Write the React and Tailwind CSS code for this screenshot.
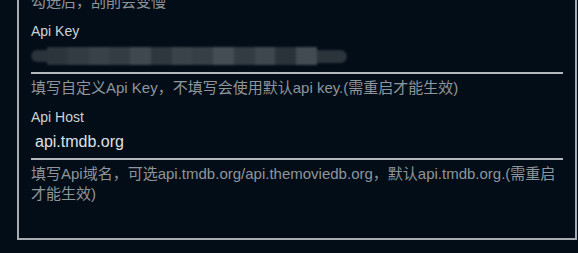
import React from 'react';

const font = { fontFamily: '"Liberation Sans", Arial, "Noto Sans CJK SC", sans-serif' };

function Field({ label, children, help }) {
  return (
    <div>
      <div className="text-[14px] leading-[18px] font-medium text-[#cfd2d5] mt-[10px]">{label}</div>
      <div className="h-[34px] border-b-2 border-[#b4b8bc] flex items-center px-[4px]">{children}</div>
      <div className="text-[15px] leading-[20px] text-[#8f959b] mt-[4px]">{help}</div>
    </div>
  );
}

function BlurredKey() {
  const blocks = ['#2c343c', '#333b43', '#3a4249', '#343c44', '#40484f', '#2e363e', '#3b434a', '#363e46', '#454d54', '#333b43', '#3f474e', '#2a323a', '#434b52'];
  return (
    <div className="flex items-center -ml-[4px] blur-[1px]">
      <div className="h-[12px] w-[16px] rounded-l-full bg-[#2a323a]" />
      <div className="flex h-[18px] w-[270px]">
        {blocks.map((c, i) => (
          <div key={i} className="flex-1" style={{ backgroundColor: c }} />
        ))}
      </div>
      <div className="h-[13px] w-[30px] rounded-r-full bg-[#2c343b]" />
    </div>
  );
}

export default function App() {
  return (
    <div className="w-[578px] h-[253px] bg-[#020d17] overflow-hidden" style={font}>
      <div className="ml-[17px] w-[560px] -mt-[8px] h-[248px] border-x-2 border-b-2 border-[#a9adb1] pl-[12px] pr-[12px]">
        <div className="text-[15px] leading-[20px] text-[#8f959b]">勾选后，刮削会变慢</div>
        <Field label="Api Key" help="填写自定义Api Key，不填写会使用默认api key.(需重启才能生效)">
          <BlurredKey />
        </Field>
        <Field label="Api Host" help="填写Api域名，可选api.tmdb.org/api.themoviedb.org，默认api.tmdb.org.(需重启才能生效)">
          <span className="text-[16px] text-[#dfe2e5]">api.tmdb.org</span>
        </Field>
      </div>
    </div>
  );
}
